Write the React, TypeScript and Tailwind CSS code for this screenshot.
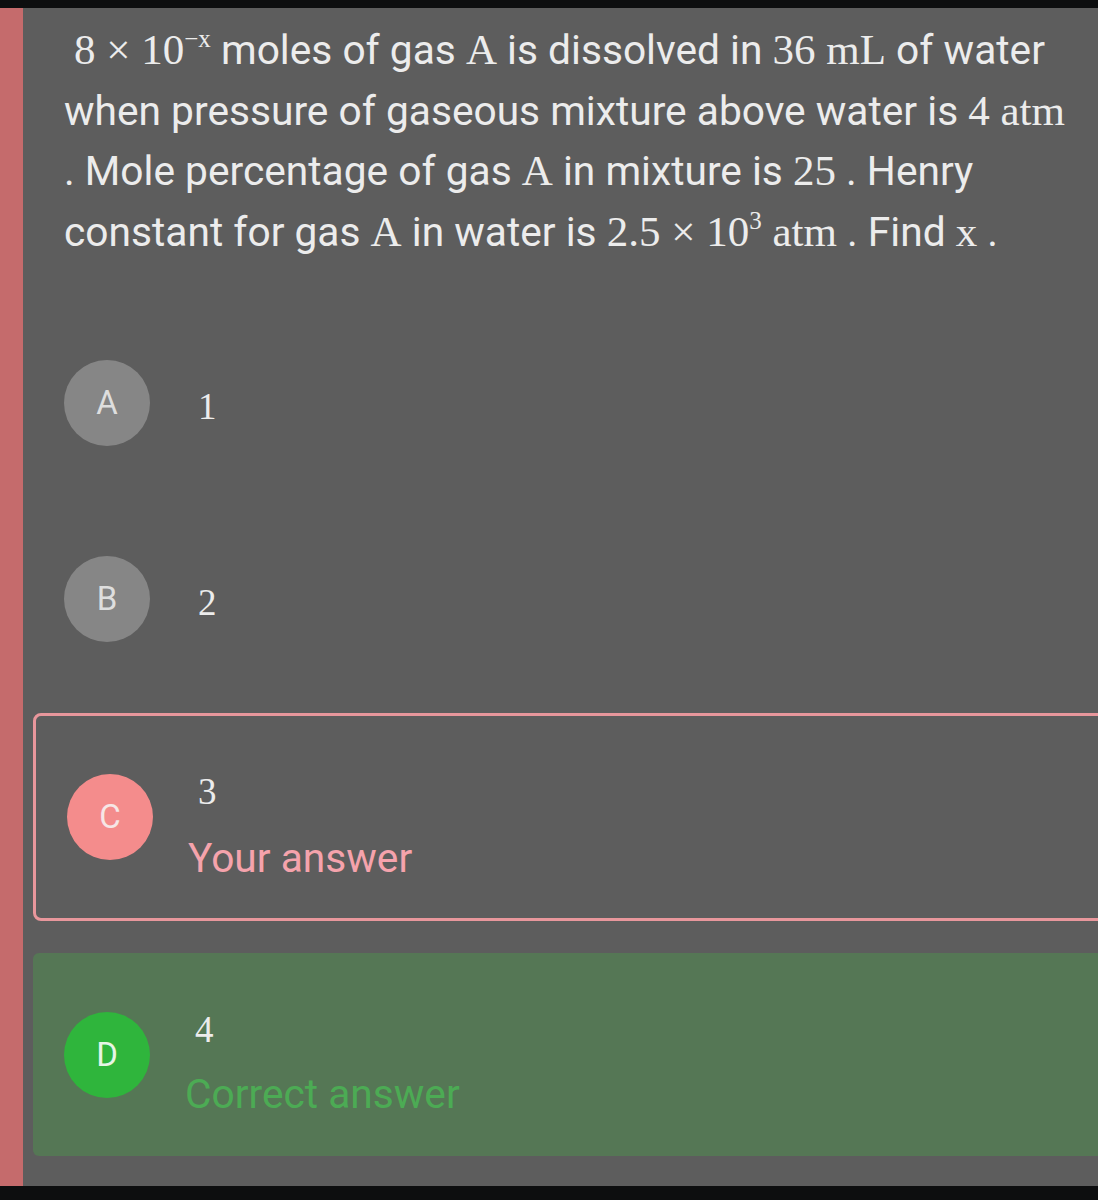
import React from "react";

const sans = "font-['Roboto','Noto_Sans',sans-serif]";
const serif = "font-['Liberation_Serif','DejaVu_Serif',serif]";

function M({ children, className }: { children: React.ReactNode; className?: string }) {
  return <span className={`${serif} text-[43px] ${className ?? ""}`}>{children}</span>;
}

function Sup({ children }: { children: React.ReactNode }) {
  return <span className="relative top-[-17px] text-[25px] leading-none">{children}</span>;
}

function Bubble({ letter, tone }: { letter: string; tone: string }) {
  return (
    <div className={`flex h-[86px] w-[86px] shrink-0 items-center justify-center rounded-full text-[33px] ${tone}`}>
      {letter}
    </div>
  );
}

function PlainOption({ letter, value, className }: { letter: string; value: string; className?: string }) {
  return (
    <div className={`flex items-center pl-[41px] ${className ?? ""}`}>
      <Bubble letter={letter} tone="bg-[#868686] text-[#dedede]" />
      <span className={`${serif} ml-[48px] mt-[8px] text-[37px] text-[#ececec]`}>{value}</span>
    </div>
  );
}

export default function App() {
  return (
    <div className={`flex h-[1200px] w-full flex-col bg-[#0d0e0f] pt-[8px] pb-[14px] ${sans}`}>
      <div className="flex flex-1">
        <div className="w-[23px] bg-[#c56b6c]" />
        <main className="flex-1 overflow-hidden bg-[#5d5d5d]">
          <p className="pl-[41px] pr-[18px] pt-[12px] text-[40.7px] leading-[60.5px] text-[#ececec]">
            <M className="ml-[10px]">
              8 × 10<Sup>−x</Sup>
            </M>{" "}
            moles of gas <M>A</M> is dissolved in <M>36 mL</M> of water when pressure of gaseous mixture above water is{" "}
            <M>4 atm</M> . Mole percentage of gas <M>A</M> in mixture is <M>25</M> . Henry constant for gas <M>A</M> in
            water is{" "}
            <M>
              2.5 × 10<Sup>3</Sup> atm
            </M>{" "}
            . Find <M>x</M> .
          </p>

          <PlainOption letter="A" value="1" className="mt-[98px]" />
          <PlainOption letter="B" value="2" className="mt-[110px]" />

          <div className="ml-[10px] mr-[-20px] mt-[71px] flex h-[208px] items-center rounded-[8px] border-[3px] border-[#e8979c] pl-[31px]">
            <Bubble letter="C" tone="bg-[#f48c8c] text-[#f6e6e6]" />
            <div className="ml-[35px] flex flex-col pt-[16px]">
              <span className={`${serif} ml-[10px] text-[37px] leading-[44px] text-[#ececec]`}>3</span>
              <span className="mt-[22px] text-[40.7px] leading-[44px] text-[#f5a3ac]">Your answer</span>
            </div>
          </div>

          <div className="ml-[10px] mr-[-20px] mt-[32px] flex h-[203px] items-center rounded-[6px] bg-[#557755] pl-[31px]">
            <Bubble letter="D" tone="bg-[#2fb53c] text-[#e6f5e6]" />
            <div className="ml-[35px] flex flex-col pt-[14px]">
              <span className={`${serif} ml-[10px] text-[37px] leading-[44px] text-[#ececec]`}>4</span>
              <span className="mt-[20px] text-[40.7px] leading-[44px] text-[#4cab54]">Correct answer</span>
            </div>
          </div>
        </main>
      </div>
    </div>
  );
}
